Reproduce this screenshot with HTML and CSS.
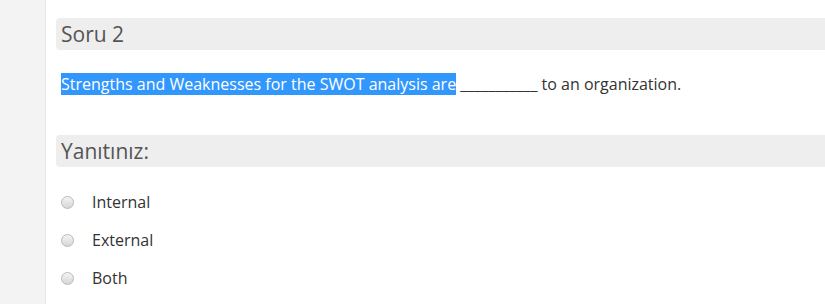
FILE: index.html
```html
<!DOCTYPE html>
<html lang="tr">
<head>
  <meta charset="UTF-8">
  <title>Soru 2</title>
  <link rel="stylesheet" href="styles.css">
</head>
<body>

  <div class="page">
    <h2 class="bar">Soru 2</h2>

    <p class="question"><span class="selected">Strengths and Weaknesses for the SWOT analysis are</span> ___________ to an organization.</p>

    <h3 class="bar">Yanıtınız:</h3>

    <ul class="options">
      <li><span class="radio"></span>Internal</li>
      <li><span class="radio"></span>External</li>
      <li><span class="radio"></span>Both</li>
    </ul>
  </div>

</body>
</html>
```

FILE: styles.css
```css
body {
  margin: 0;
  background-color: #f3f3f3;
  font-family: "Open Sans", Arial, sans-serif;
  color: #333;
  overflow: hidden;
}

.page {
  margin-left: 45px;
  min-height: 304px;
  padding: 18px 0 0 10px;
  background-color: #fff;
  border-left: 1px solid #e8e8e8;
  box-sizing: border-box;
}

.bar {
  margin: 0;
  height: 32px;
  padding-left: 5px;
  line-height: 32px;
  font-size: 21px;
  font-weight: normal;
  color: #555;
  background-color: #eee;
  border-radius: 4px 0 0 4px;
}

.question {
  margin: 23px 0 40px;
  padding-left: 5px;
  font-size: 16px;
  line-height: 22px;
}

.selected {
  background-color: #3297fd;
  color: #fff;
}

.options {
  list-style: none;
  margin: 16px 0 0;
  padding: 0;
}

.options li {
  display: flex;
  align-items: center;
  height: 38px;
  font-size: 16px;
}

.radio {
  width: 11px;
  height: 11px;
  margin: 0 18px 0 5px;
  border: 1px solid #b9b9b9;
  border-radius: 50%;
  background: linear-gradient(#f4f4f4, #d6d6d6);
}
```
